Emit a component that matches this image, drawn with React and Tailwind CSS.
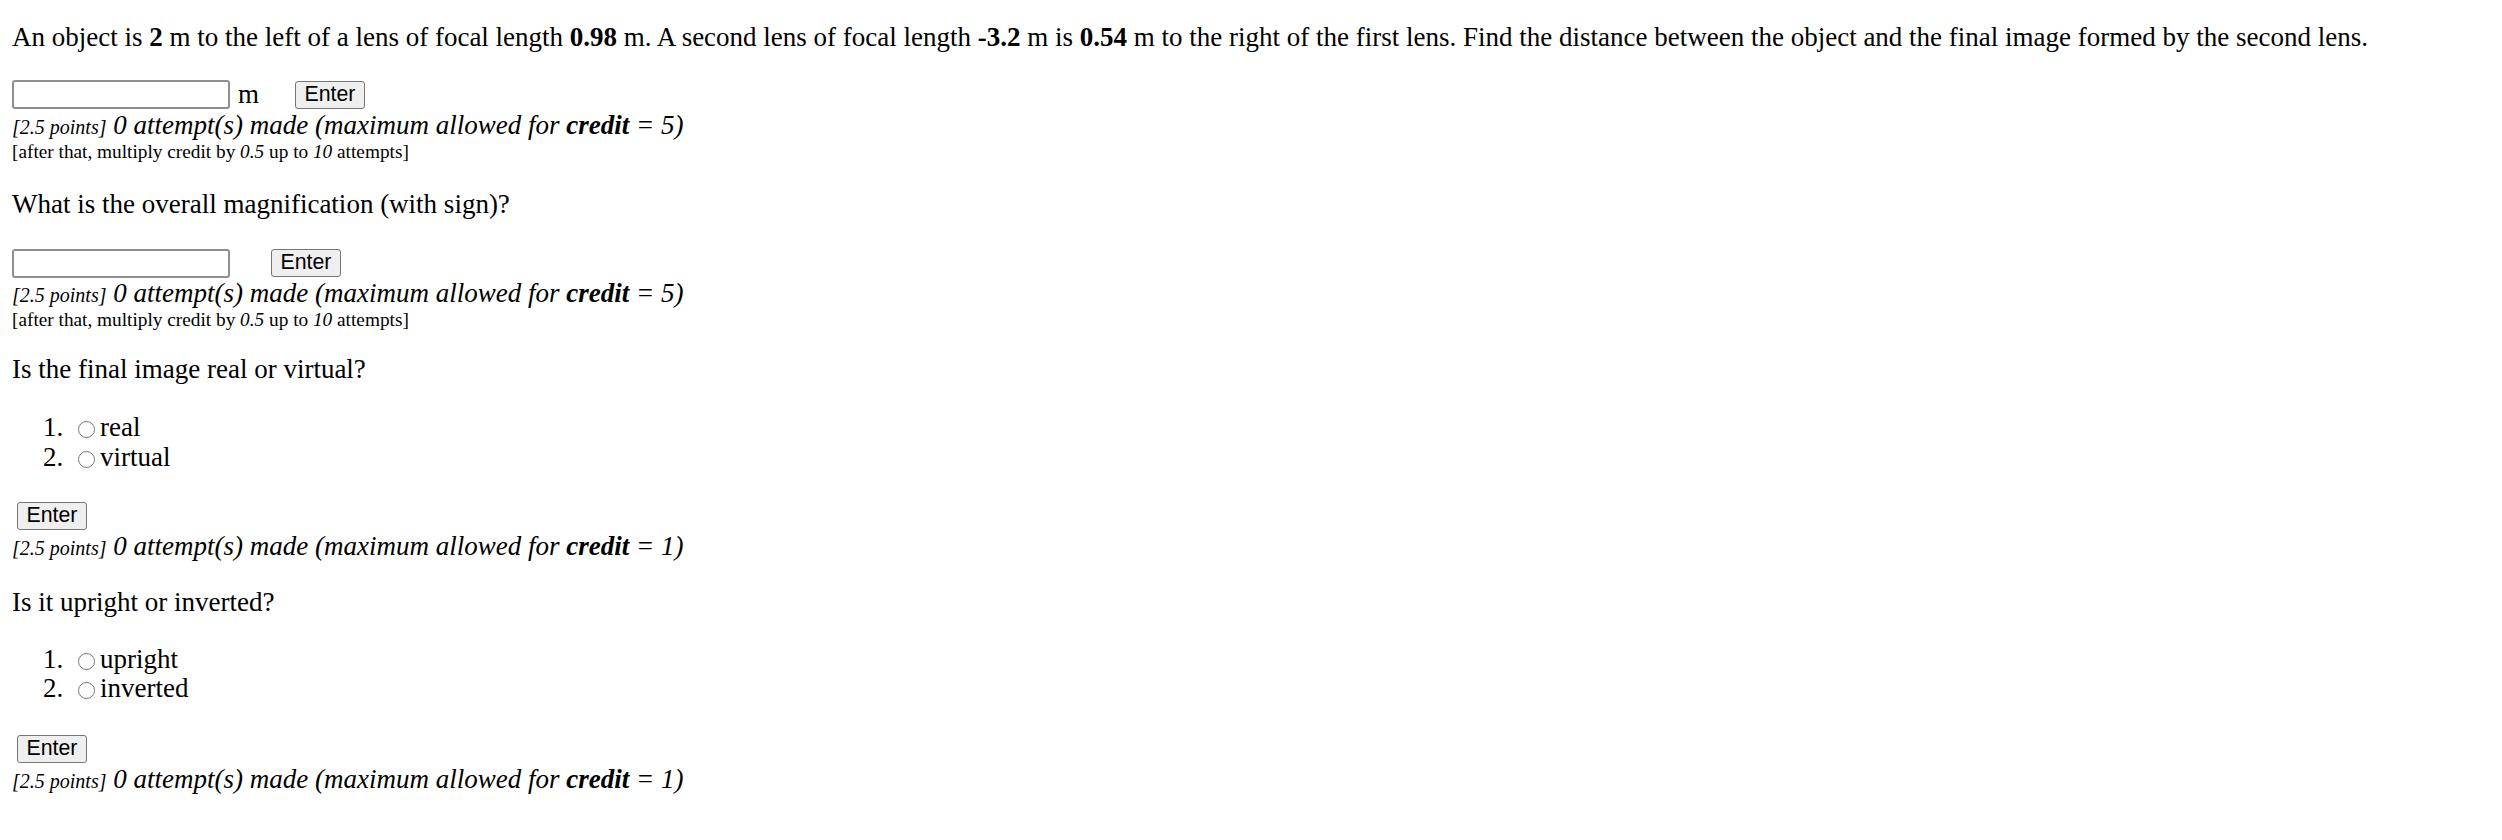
import React from 'react';

const EnterButton = ({ className = '' }) => (
    <button
        type="button"
        className={`w-[70px] h-[28px] border border-[#767676] rounded-[3px] bg-[#efefef] text-black text-[21.3px] leading-none font-['Liberation_Sans',Arial,sans-serif] ${className}`}
    >
        Enter
    </button>
);

const Attempts = ({ max }) => (
    <div className="mt-[1.5px] h-[29px] leading-[29px] italic whitespace-nowrap">
        <span className="text-[20px]">[2.5 points]</span> 0 attempt(s) made (maximum allowed for{' '}
        <b>credit</b> = {max})
    </div>
);

const AfterThat = () => (
    <div className="text-[19.3px] leading-[24px] whitespace-nowrap">
        [after that, multiply credit by <i>0.5</i> up to <i>10</i> attempts]
    </div>
);

const Choices = ({ name, options, className = '' }) => (
    <ol className={`list-none pl-[31px] ${className}`}>
        {options.map((opt, i) => (
            <li key={opt} className="h-[29.5px] leading-[29px]">
                <span className="inline-block w-[34px]">{i + 1}.</span>
                <input
                    type="radio"
                    name={name}
                    className="appearance-none w-[17px] h-[17px] rounded-full border border-[#767676] bg-white align-middle ml-[1px] mr-[5px]"
                />
                {opt}
            </li>
        ))}
    </ol>
);

export default function App() {
    return (
        <div className="bg-white text-black pl-[12px] pb-[40px] font-['Liberation_Serif','Times_New_Roman',serif] text-[27px] leading-[29px]">
            <p className="pt-[23px] whitespace-nowrap">
                An object is <b>2</b> m to the left of a lens of focal length <b>0.98</b> m. A second lens of focal
                length <b>-3.2</b> m is <b>0.54</b> m to the right of the first lens. Find the distance between the
                object and the final image formed by the second lens.
            </p>

            <div className="mt-[28px] h-[29px] flex items-center">
                <input type="text" className="w-[218px] h-[29px] border-2 border-[#8f8f8f] rounded-[3px] bg-white" />
                <span className="ml-[8px]">m</span>
                <EnterButton className="ml-[36px]" />
            </div>
            <Attempts max={5} />
            <AfterThat />

            <p className="mt-[26px]">What is the overall magnification (with sign)?</p>
            <div className="mt-[30px] h-[29px] flex items-center">
                <input type="text" className="w-[218px] h-[29px] border-2 border-[#8f8f8f] rounded-[3px] bg-white" />
                <EnterButton className="ml-[41px]" />
            </div>
            <Attempts max={5} />
            <AfterThat />

            <p className="mt-[23px]">Is the final image real or virtual?</p>
            <Choices name="q3" options={['real', 'virtual']} className="mt-[29px]" />
            <div className="mt-[29px] h-[29px] flex items-center">
                <EnterButton className="ml-[5px]" />
            </div>
            <Attempts max={1} />

            <p className="mt-[27px]">Is it upright or inverted?</p>
            <Choices name="q4" options={['upright', 'inverted']} className="mt-[28px]" />
            <div className="mt-[31px] h-[29px] flex items-center">
                <EnterButton className="ml-[5px]" />
            </div>
            <Attempts max={1} />
        </div>
    );
}
